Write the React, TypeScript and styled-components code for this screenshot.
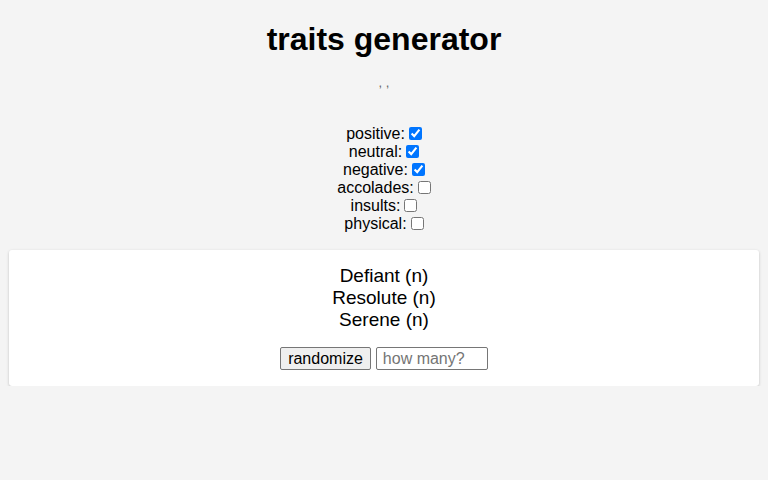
import { useState } from "react";
import styled, { createGlobalStyle } from "styled-components";

const GlobalStyle = createGlobalStyle`
  body {
    margin: 0;
    background: #f4f4f4;
    font-family: "Liberation Sans", Arial, sans-serif;
    color: #000;
  }
`;

const Page = styled.div`
  padding: 0 9px;
  text-align: center;
`;

const Title = styled.h1`
  margin: 0;
  padding-top: 21px;
  font-size: 32px;
  line-height: 37px;
  font-weight: bold;
`;

const Sub = styled.p`
  margin: 17px 0 0;
  font-size: 13px;
  line-height: 15px;
  color: #666;
  white-space: pre;
`;

const Filters = styled.div`
  margin-top: 35px;
  display: flex;
  flex-direction: column;
  align-items: center;
`;

const FilterRow = styled.label`
  font-size: 16px;
  line-height: 18px;
  display: flex;
  align-items: center;
`;

const Check = styled.input`
  margin: 0 0 2px 4px;
  width: 13px;
  height: 13px;
`;

const Card = styled.div`
  margin-top: 17px;
  background: #fff;
  border-radius: 3px;
  box-shadow: 0 1px 3px rgba(0, 0, 0, 0.22);
  padding: 15px 0 16px;
`;

const Trait = styled.div`
  font-size: 19px;
  line-height: 22px;
`;

const Controls = styled.div`
  margin-top: 16px;
  display: flex;
  justify-content: center;
  gap: 5px;
`;

const Button = styled.button`
  font-family: "Liberation Sans", Arial, sans-serif;
  font-size: 16px;
  height: 23px;
  padding: 0 7px;
  background: #efefef;
  border: 1px solid #767676;
  border-radius: 2px;
  color: #000;
`;

const Input = styled.input`
  font-family: "Liberation Sans", Arial, sans-serif;
  font-size: 16px;
  width: 112px;
  height: 23px;
  box-sizing: border-box;
  padding: 0 6px;
  border: 1px solid #767676;
  border-radius: 2px;
  &::placeholder {
    color: #757575;
  }
`;

const filters = [
  { name: "positive", on: true },
  { name: "neutral", on: true },
  { name: "negative", on: true },
  { name: "accolades", on: false },
  { name: "insults", on: false },
  { name: "physical", on: false },
];

const traits = ["Defiant (n)", "Resolute (n)", "Serene (n)"];

export default function App() {
  const [checked, setChecked] = useState(filters.map((f) => f.on));

  return (
    <>
      <GlobalStyle />
      <Page>
        <Title>traits generator</Title>
        <Sub>{", ,"}</Sub>
        <Filters>
          {filters.map((f, i) => (
            <FilterRow key={f.name}>
              {f.name}:
              <Check
                type="checkbox"
                checked={checked[i]}
                onChange={() =>
                  setChecked(checked.map((c, j) => (j === i ? !c : c)))
                }
              />
            </FilterRow>
          ))}
        </Filters>
        <Card>
          {traits.map((t) => (
            <Trait key={t}>{t}</Trait>
          ))}
          <Controls>
            <Button>randomize</Button>
            <Input placeholder="how many?" />
          </Controls>
        </Card>
      </Page>
    </>
  );
}
